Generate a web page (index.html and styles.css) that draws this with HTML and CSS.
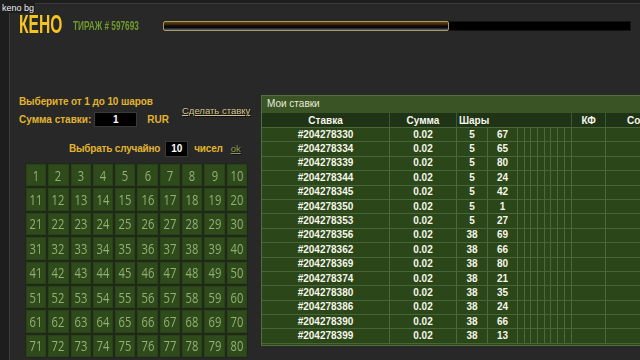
FILE: index.html
```html
<!DOCTYPE html>
<html lang="ru">
<head>
<meta charset="utf-8">
<link rel="stylesheet" href="styles.css">
</head>
<body>
<div class="app">
  <div class="legend">keno bg</div>
  <div class="frame">
    <div class="top">
      <div class="logo"><span>КЕНО</span></div>
      <div class="draw"><span>ТИРАЖ # 597693</span></div>
      <div class="bar"><div class="bar-fill" style="width:286px"></div></div>
    </div>
    <div class="main">
      <div class="left">
        <div class="bet">
          <div class="bet-fields">
            <div class="hint">Выберите от 1 до 10 шаров</div>
            <div class="sum">
              <span class="label">Сумма ставки:</span>
              <span class="box box-sum">1</span>
              <span class="label cur">RUR</span>
            </div>
          </div>
          <span class="link make">Сделать ставку</span>
        </div>
        <div class="random">
          <span class="label">Выбрать случайно</span>
          <span class="box box-count">10</span>
          <span class="label">чисел</span>
          <span class="link ok">ok</span>
        </div>
        <div class="grid">
          <div class="cell"><span>1</span></div><div class="cell"><span>2</span></div><div class="cell"><span>3</span></div><div class="cell"><span>4</span></div><div class="cell"><span>5</span></div><div class="cell"><span>6</span></div><div class="cell"><span>7</span></div><div class="cell"><span>8</span></div><div class="cell"><span>9</span></div><div class="cell"><span>10</span></div>
          <div class="cell"><span>11</span></div><div class="cell"><span>12</span></div><div class="cell"><span>13</span></div><div class="cell"><span>14</span></div><div class="cell"><span>15</span></div><div class="cell"><span>16</span></div><div class="cell"><span>17</span></div><div class="cell"><span>18</span></div><div class="cell"><span>19</span></div><div class="cell"><span>20</span></div>
          <div class="cell"><span>21</span></div><div class="cell"><span>22</span></div><div class="cell"><span>23</span></div><div class="cell"><span>24</span></div><div class="cell"><span>25</span></div><div class="cell"><span>26</span></div><div class="cell"><span>27</span></div><div class="cell"><span>28</span></div><div class="cell"><span>29</span></div><div class="cell"><span>30</span></div>
          <div class="cell"><span>31</span></div><div class="cell"><span>32</span></div><div class="cell"><span>33</span></div><div class="cell"><span>34</span></div><div class="cell"><span>35</span></div><div class="cell"><span>36</span></div><div class="cell"><span>37</span></div><div class="cell"><span>38</span></div><div class="cell"><span>39</span></div><div class="cell"><span>40</span></div>
          <div class="cell"><span>41</span></div><div class="cell"><span>42</span></div><div class="cell"><span>43</span></div><div class="cell"><span>44</span></div><div class="cell"><span>45</span></div><div class="cell"><span>46</span></div><div class="cell"><span>47</span></div><div class="cell"><span>48</span></div><div class="cell"><span>49</span></div><div class="cell"><span>50</span></div>
          <div class="cell"><span>51</span></div><div class="cell"><span>52</span></div><div class="cell"><span>53</span></div><div class="cell"><span>54</span></div><div class="cell"><span>55</span></div><div class="cell"><span>56</span></div><div class="cell"><span>57</span></div><div class="cell"><span>58</span></div><div class="cell"><span>59</span></div><div class="cell"><span>60</span></div>
          <div class="cell"><span>61</span></div><div class="cell"><span>62</span></div><div class="cell"><span>63</span></div><div class="cell"><span>64</span></div><div class="cell"><span>65</span></div><div class="cell"><span>66</span></div><div class="cell"><span>67</span></div><div class="cell"><span>68</span></div><div class="cell"><span>69</span></div><div class="cell"><span>70</span></div>
          <div class="cell"><span>71</span></div><div class="cell"><span>72</span></div><div class="cell"><span>73</span></div><div class="cell"><span>74</span></div><div class="cell"><span>75</span></div><div class="cell"><span>76</span></div><div class="cell"><span>77</span></div><div class="cell"><span>78</span></div><div class="cell"><span>79</span></div><div class="cell"><span>80</span></div>
        </div>
      </div>
      <div class="panel">
        <div class="panel-title">Мои ставки</div>
        <table class="bets">
          <colgroup>
            <col class="c-id"><col class="c-sum"><col class="c-b1"><col class="c-b2">
            <col class="c-n7"><col class="c-n6"><col class="c-n7"><col class="c-n7"><col class="c-n6"><col class="c-n7"><col class="c-n7"><col class="c-n7">
            <col class="c-kf"><col class="c-st">
          </colgroup>
          <thead>
            <tr><th>Ставка</th><th>Сумма</th><th colspan="10" class="balls-h">Шары</th><th>КФ</th><th>Состояние</th></tr>
          </thead>
          <tbody>
            <tr><td>#204278330</td><td>0.02</td><td>5</td><td>67</td><td></td><td></td><td></td><td></td><td></td><td></td><td></td><td></td><td></td><td></td></tr>
            <tr><td>#204278334</td><td>0.02</td><td>5</td><td>65</td><td></td><td></td><td></td><td></td><td></td><td></td><td></td><td></td><td></td><td></td></tr>
            <tr><td>#204278339</td><td>0.02</td><td>5</td><td>80</td><td></td><td></td><td></td><td></td><td></td><td></td><td></td><td></td><td></td><td></td></tr>
            <tr><td>#204278344</td><td>0.02</td><td>5</td><td>24</td><td></td><td></td><td></td><td></td><td></td><td></td><td></td><td></td><td></td><td></td></tr>
            <tr><td>#204278345</td><td>0.02</td><td>5</td><td>42</td><td></td><td></td><td></td><td></td><td></td><td></td><td></td><td></td><td></td><td></td></tr>
            <tr><td>#204278350</td><td>0.02</td><td>5</td><td>1</td><td></td><td></td><td></td><td></td><td></td><td></td><td></td><td></td><td></td><td></td></tr>
            <tr><td>#204278353</td><td>0.02</td><td>5</td><td>27</td><td></td><td></td><td></td><td></td><td></td><td></td><td></td><td></td><td></td><td></td></tr>
            <tr><td>#204278356</td><td>0.02</td><td>38</td><td>69</td><td></td><td></td><td></td><td></td><td></td><td></td><td></td><td></td><td></td><td></td></tr>
            <tr><td>#204278362</td><td>0.02</td><td>38</td><td>66</td><td></td><td></td><td></td><td></td><td></td><td></td><td></td><td></td><td></td><td></td></tr>
            <tr><td>#204278369</td><td>0.02</td><td>38</td><td>80</td><td></td><td></td><td></td><td></td><td></td><td></td><td></td><td></td><td></td><td></td></tr>
            <tr><td>#204278374</td><td>0.02</td><td>38</td><td>21</td><td></td><td></td><td></td><td></td><td></td><td></td><td></td><td></td><td></td><td></td></tr>
            <tr><td>#204278380</td><td>0.02</td><td>38</td><td>35</td><td></td><td></td><td></td><td></td><td></td><td></td><td></td><td></td><td></td><td></td></tr>
            <tr><td>#204278386</td><td>0.02</td><td>38</td><td>24</td><td></td><td></td><td></td><td></td><td></td><td></td><td></td><td></td><td></td><td></td></tr>
            <tr><td>#204278390</td><td>0.02</td><td>38</td><td>66</td><td></td><td></td><td></td><td></td><td></td><td></td><td></td><td></td><td></td><td></td></tr>
            <tr><td>#204278399</td><td>0.02</td><td>38</td><td>13</td><td></td><td></td><td></td><td></td><td></td><td></td><td></td><td></td><td></td><td></td></tr>
          </tbody>
        </table>
      </div>
    </div>
  </div>
</div>
</body>
</html>
```
FILE: styles.css
```css
* { box-sizing: border-box; }
html, body { margin: 0; padding: 0; background: #1d1d1d; }
body { width: 640px; height: 360px; overflow: hidden; font-family: "Liberation Sans", Arial, sans-serif; }

.app {
  position: relative;
  width: 640px;
  height: 360px;
  padding-top: 3px;
  background: #1d1d1d;
  overflow: hidden;
}
.legend {
  position: absolute;
  left: 1px;
  top: 3px;
  padding: 0 1px;
  font-size: 9px;
  line-height: 10px;
  color: #ececec;
  background: #1d1d1d;
}
.frame {
  margin-left: 9px;
  height: 357px;
  border-top: 1px solid #3c3c3c;
  border-left: 1px solid #3c3c3c;
  background: #282828;
}

.top {
  display: flex;
  align-items: flex-start;
  height: 40px;
  padding-left: 9px;
}
.logo {
  width: 54px;
  height: 20px;
  margin-top: 10px;
  font-size: 26px;
  line-height: 20px;
  font-weight: bold;
  color: #f6c421;
  white-space: nowrap;
}
.logo span { display: inline-block; transform: scaleX(0.6); transform-origin: left center; }
.draw {
  width: 90px;
  margin-top: 16px;
  font-size: 12.5px;
  line-height: 13px;
  font-weight: bold;
  color: #6f9a2c;
  white-space: nowrap;
}
.draw span { display: inline-block; transform: scaleX(0.66); transform-origin: left center; }
.bar {
  width: 468px;
  height: 10px;
  margin-top: 17px;
  background: #000;
  border: 1px solid #141414;
}
.bar-fill {
  margin: -1px 0 0 -1px;
  height: 10px;
  border: 1px solid #a89a66;
  border-radius: 2px;
  background: linear-gradient(#6a430e 0%, #3a250a 30%, #0c0906 50%, #0a0a0c 70%, #5c5c70 100%);
}

.main {
  display: flex;
  margin-top: 51px;
}
.left {
  width: 251px;
  flex: none;
  padding-left: 9px;
}
.label, .hint {
  font-size: 10px;
  font-weight: bold;
  color: #e2b42c;
  white-space: nowrap;
}
.bet { display: flex; }
.bet-fields { width: 163px; flex: none; }
.hint { line-height: 12px; padding-top: 1px; height: 13px; letter-spacing: -0.1px; }
.sum {
  display: flex;
  align-items: center;
  margin-top: 4px;
  height: 14px;
}
.box {
  display: inline-block;
  height: 15px;
  background: #000;
  border: 1px solid #383838;
  color: #fff;
  font-size: 10px;
  font-weight: bold;
  line-height: 13px;
  text-align: center;
}
.box-sum { width: 43px; margin-left: 3px; }
.cur { margin-left: 10px; }
.link {
  font-size: 9.5px;
  color: #d2c48c;
  text-decoration: underline;
  text-shadow: 1px 1px 0 #111;
  white-space: nowrap;
}
.make { margin-top: 10px; line-height: 12px; height: 12px; }
.random {
  display: flex;
  align-items: center;
  height: 15px;
  margin-top: 15px;
  padding-left: 50px;
}
.random .label { letter-spacing: -0.2px; }
.box-count { width: 23px; height: 16px; margin: 0 6px 0 5px; }
.ok { margin-left: 8px; color: #8f9a52; }

.grid {
  margin-top: 7px;
  margin-left: 6px;
  width: 223px;
  height: 195px;
  display: grid;
  grid-template-columns: repeat(10, 1fr);
  grid-template-rows: repeat(8, 1fr);
  gap: 2px;
  padding: 1px;
  background: #1e2918;
}
.cell {
  display: flex;
  align-items: center;
  justify-content: center;
  background: #2f4b1b;
  box-shadow: inset 0 0 0 1px #2a4219;
  font-family: "Open Sans", "Liberation Sans", sans-serif;
  font-size: 14px;
  color: #93b074;
}
.cell span { display: inline-block; transform: scaleX(0.8); }

.panel {
  width: 420px;
  flex: none;
  height: 251px;
  border: 1px solid #546d3e;
  border-right: none;
  background: #2b4719;
}
.panel-title {
  height: 17px;
  line-height: 16px;
  padding-left: 5px;
  background: #3a5426;
  color: #e6ead6;
  font-size: 10px;
}
.bets {
  border-spacing: 0;
  table-layout: fixed;
  width: 404px;
  font-size: 10px;
  font-weight: bold;
  color: #f6f6ea;
}
.c-id { width: 128px; }
.c-sum { width: 67px; }
.c-b1 { width: 31px; }
.c-b2 { width: 30px; }
.c-n7 { width: 7px; }
.c-n6 { width: 6px; }
.c-kf { width: 34px; }
.c-st { width: 96px; }
.bets th {
  height: 15px;
  padding: 0;
  background: #1f3317;
  border-right: 1px solid #3f5a30;
  border-bottom: 1px solid #4a6637;
  line-height: 13px;
  font-weight: bold;
  text-align: center;
  white-space: nowrap;
  overflow: hidden;
}
.bets th.balls-h { text-align: left; padding-left: 2px; }
.bets td {
  height: 14.4px;
  padding: 0;
  border-right: 1px solid #4d6a3b;
  border-bottom: 1px solid #48653a;
  line-height: 12px;
  text-align: center;
  white-space: nowrap;
  overflow: hidden;
}
```
